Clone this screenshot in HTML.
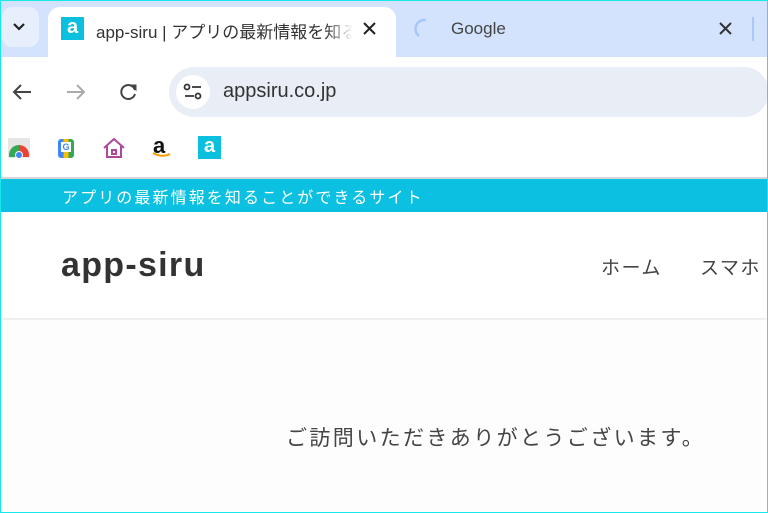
<!DOCTYPE html>
<html><head><meta charset="utf-8"><style>
*{margin:0;padding:0;box-sizing:border-box}
body{width:768px;height:513px;overflow:hidden;position:relative;background:#fff;font-family:"Liberation Sans","Noto Sans CJK JP",sans-serif}
.a{position:absolute}
.fav{background:#0bbfde;color:#fff;font-weight:bold;text-align:center;font-family:"Liberation Sans",sans-serif}
</style></head><body>
<div class="a" style="left:0;top:0;width:768px;height:57px;background:#d3e3fd"></div>
<div class="a" style="left:2px;top:7px;width:37px;height:40px;background:#e8effc;border-radius:10px"></div>
<svg class="a" style="left:12px;top:22px" width="14" height="10"><path d="M2 2 L7 7 L12 2" stroke="#222" stroke-width="2.2" fill="none"/></svg>
<div class="a" style="left:48px;top:7px;width:348px;height:52px;background:#fff;border-radius:12px 12px 0 0"></div>
<div class="a fav" style="left:61px;top:17px;width:23px;height:23px;font-size:20px;line-height:20px">a</div>
<div class="a" style="left:96px;top:18px;font-size:17px;color:#333;white-space:nowrap;width:256px;overflow:hidden">app-siru | アプリの最新情報を知る</div>
<div class="a" style="left:325px;top:15px;width:28px;height:28px;background:linear-gradient(90deg,rgba(255,255,255,0),#fff)"></div>
<svg class="a" style="left:363px;top:22px" width="13" height="13"><path d="M1 1L12 12M12 1L1 12" stroke="#222" stroke-width="2"/></svg>
<svg class="a" style="left:414px;top:17px" width="24" height="24"><path d="M12 3 A9 9 0 0 0 5 19" stroke="#a8c7fa" stroke-width="2.5" fill="none"/></svg>
<div class="a" style="left:451px;top:19px;font-size:17px;color:#444">Google</div>
<svg class="a" style="left:719px;top:22px" width="13" height="13"><path d="M1 1L12 12M12 1L1 12" stroke="#333" stroke-width="2"/></svg>
<div class="a" style="left:752px;top:17px;width:2px;height:24px;background:#a8c7fa"></div>
<svg class="a" style="left:11px;top:82px" width="22" height="20"><path d="M20 10H3M10 3L3 10L10 17" stroke="#444" stroke-width="2" fill="none"/></svg>
<svg class="a" style="left:65px;top:82px" width="22" height="20"><path d="M2 10H19M12 3L19 10L12 17" stroke="#aaa" stroke-width="2" fill="none"/></svg>
<svg class="a" style="left:118px;top:81px" width="22" height="22"><path d="M17 9A7 7 0 1 0 17 13" stroke="#444" stroke-width="2" fill="none"/><path d="M13 4L18 4L18 9Z" fill="#444" stroke="#444" stroke-width="1"/></svg>
<div class="a" style="left:169px;top:67px;width:600px;height:50px;background:#e9eef6;border-radius:25px"></div>
<div class="a" style="left:176px;top:75px;width:34px;height:34px;background:#fff;border-radius:50%"></div>
<svg class="a" style="left:183px;top:83px" width="20" height="18"><circle cx="4" cy="4" r="2.5" stroke="#333" stroke-width="1.8" fill="none"/><path d="M9 4H18M2 13H11" stroke="#333" stroke-width="1.8"/><circle cx="15" cy="13" r="2.5" stroke="#333" stroke-width="1.8" fill="none"/></svg>
<div class="a" style="left:223px;top:80px;font-size:20px;color:#333">appsiru.co.jp</div>
<div class="a" style="left:8px;top:138px;width:22px;height:20px;background:#e6e6e6"></div>
<div class="a" style="left:9px;top:145px;width:20px;height:20px;border-radius:50%;background:conic-gradient(#ea4335 0 33%,#fbbc04 0 66%,#34a853 0);clip-path:inset(0 0 40% 0)"></div>
<div class="a" style="left:15px;top:151px;width:8px;height:8px;border-radius:50%;background:#4285f4;border:1px solid #fff"></div>
<div class="a" style="left:58px;top:139px;width:16px;height:19px;border-radius:3px;background:linear-gradient(90deg,#4285f4 0 33%,#fbbc04 0 66%,#34a853 0)"></div>
<div class="a" style="left:61px;top:142px;width:10px;height:10px;background:#fff;font-size:9px;line-height:10px;text-align:center;color:#4285f4;font-weight:bold">G</div>
<svg class="a" style="left:101px;top:136px" width="26" height="24"><path d="M3 12L13 3L23 12M6 10V21H20V10M11 14H15V18H11Z" stroke="#b0479a" stroke-width="2" fill="none"/></svg>
<div class="a" style="left:153px;top:133px;font-size:22px;font-weight:bold;color:#111">a</div>
<svg class="a" style="left:152px;top:152px" width="20" height="7"><path d="M1 1Q10 6 18 2" stroke="#f90" stroke-width="2" fill="none"/></svg>
<div class="a fav" style="left:198px;top:136px;width:23px;height:23px;font-size:20px;line-height:20px">a</div>
<div class="a" style="left:0;top:177px;width:768px;height:2px;background:#d6d6d6"></div>
<div class="a" style="left:0;top:179px;width:768px;height:33px;background:#0bc0e0"></div>
<div class="a" style="left:62px;top:184px;font-size:16px;color:#fff;letter-spacing:2.1px;white-space:nowrap">アプリの最新情報を知ることができるサイト</div>
<div class="a" style="left:0;top:212px;width:768px;height:106px;background:#fff;box-shadow:0 3px 5px rgba(0,0,0,.08)"></div>
<div class="a" style="left:0;top:320px;width:768px;height:193px;background:#fdfdfd"></div>
<div class="a" style="left:61px;top:246px;font-size:34px;font-weight:bold;color:#333;letter-spacing:1.3px">app-siru</div>
<div class="a" style="left:601px;top:253px;font-size:19px;color:#444;letter-spacing:1.5px">ホーム</div>
<div class="a" style="left:700px;top:253px;font-size:19px;color:#444;letter-spacing:1.5px;white-space:nowrap">スマホ</div>
<div class="a" style="left:286px;top:422px;font-size:21px;color:#444;letter-spacing:2.4px;white-space:nowrap">ご訪問いただきありがとうございます。</div>
<div class="a" style="left:0;top:0;width:768px;height:513px;border:1px solid #17e8ec"></div>
</body></html>
